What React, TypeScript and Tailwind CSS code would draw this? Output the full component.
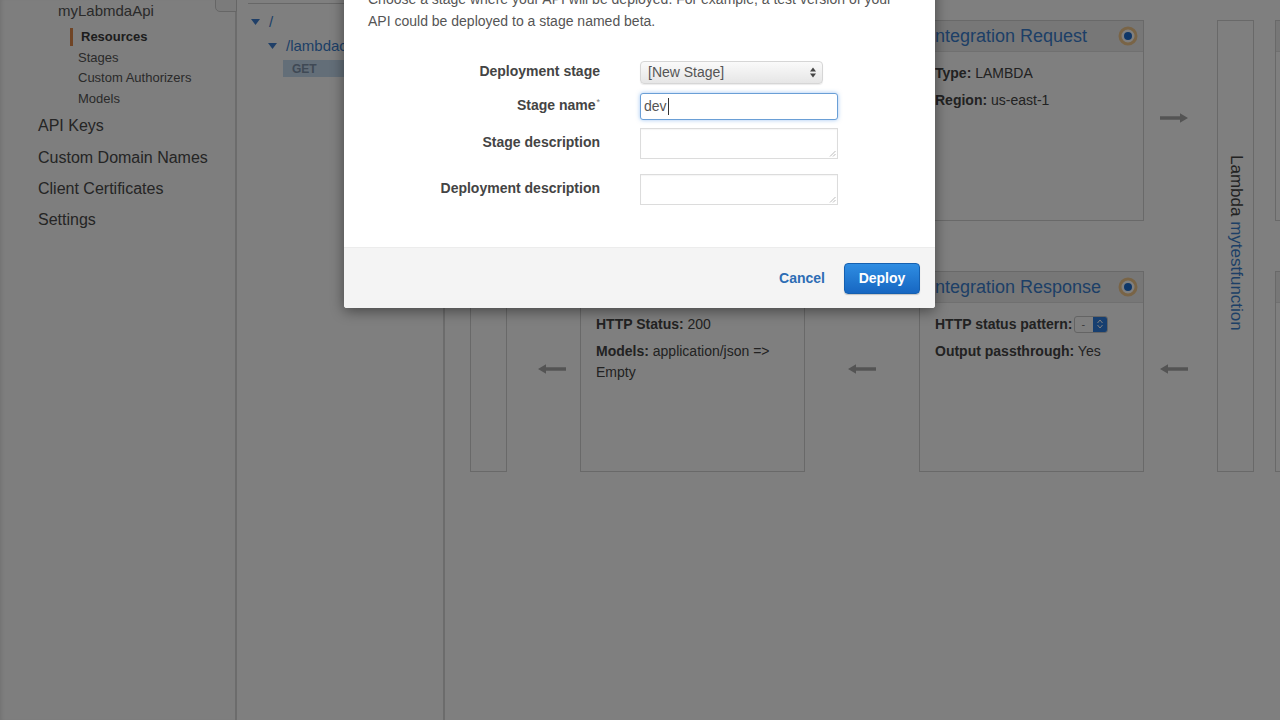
import React from "react"

const blue = "text-[#3b7fce]"

function Arrow({ dir }: { dir: "left" | "right" }) {
  return (
    <svg width="28" height="10" viewBox="0 0 28 10">
      {dir === "right" ? (
        <path d="M0 3.2h20V0.2L28 5l-8 4.8V6.8H0z" fill="#a9a9a9" />
      ) : (
        <path d="M28 3.2H8V0.2L0 5l8 4.8V6.8h20z" fill="#a9a9a9" />
      )}
    </svg>
  )
}

function StatusDot() {
  return (
    <svg width="20" height="20" viewBox="0 0 20 20">
      <circle cx="10" cy="10" r="8" fill="#fff" stroke="#f3c98c" strokeWidth="3" />
      <circle cx="10" cy="10" r="4" fill="#1f6fd0" />
    </svg>
  )
}

function Caret() {
  return (
    <svg width="9" height="6" viewBox="0 0 9 6">
      <path d="M0 0h9L4.5 6z" fill="#3f7fd0" />
    </svg>
  )
}

function Box({ title, header, children }: { title?: string; header?: boolean; children?: React.ReactNode }) {
  return (
    <div className="w-[225px] h-[201px] border border-[#d3d3d3] bg-white flex flex-col">
      {(title || header) && (
        <div className="h-[31px] shrink-0 bg-[#eeeeee] border-b border-[#e0e0e0] flex items-center justify-between pl-[10px] pr-[5px]">
          <span className={`text-[18px] ${blue}`}>{title}</span>
          <StatusDot />
        </div>
      )}
      <div className="px-[15px] pt-[11px] text-[14px] leading-[20px] text-[#444] flex flex-col gap-[7px]">
        {children}
      </div>
    </div>
  )
}

function ArrowCol({ width, shift }: { width: string; shift: string }) {
  return (
    <div className={`${width} ${shift} shrink-0 flex flex-col gap-[50px]`}>
      <div className="h-[201px] pb-[6px] flex items-center justify-center">
        <Arrow dir="right" />
      </div>
      <div className="h-[201px] pb-[6px] flex items-center justify-center">
        <Arrow dir="left" />
      </div>
    </div>
  )
}

function Field({ label, star, children }: { label: string; star?: boolean; children: React.ReactNode }) {
  return (
    <div className="flex items-center">
      <div className="w-[256px] shrink-0 text-right text-[14px] font-bold text-[#444] -mt-[3px]">
        {label}
        {star && <span className="relative -top-[5px] text-[9px] font-normal text-[#777] ml-[1px]">*</span>}
      </div>
      <div className="ml-[40px]">{children}</div>
    </div>
  )
}

function Textarea() {
  return (
    <div className="relative w-[198px] h-[31px] border border-[#dcdcdc] bg-white shadow-[inset_0_1px_1px_rgba(0,0,0,0.04)]">
      <svg className="absolute right-[1px] bottom-[1px]" width="7" height="7" viewBox="0 0 7 7">
        <path d="M6.5 1L1 6.5M6.5 4L4 6.5" stroke="#aaa" strokeWidth="0.8" />
      </svg>
    </div>
  )
}

export default function App() {
  return (
    <div className="relative isolate w-[1280px] h-[720px] overflow-hidden bg-white font-['Liberation_Sans',Arial,sans-serif]">
      <div className="relative z-0 flex h-full">
        {/* sidebar */}
        <aside className="relative w-[237px] shrink-0 h-full bg-[#fcfcfc] border-r-2 border-[#d9d9d9] shadow-[inset_4px_0_4px_-3px_rgba(0,0,0,0.12)]">
          <div className="absolute right-[-2px] top-[-6px] w-[22px] h-[18px] border border-[#cccccc] rounded-bl-[5px] bg-[#f7f7f7]" />
          <div className="pl-[58px] pt-[1px] text-[15px] leading-[20px] text-[#555]">myLabmdaApi</div>
          <div className="mt-[6px] text-[13px] leading-[20.6px] text-[#555]">
            <div className="relative pl-[81px] font-bold text-[#3a3a3a]">
              <span className="absolute left-[70px] top-[1px] w-[3px] h-[18px] bg-[#e0894a]" />
              Resources
            </div>
            <div className="pl-[78px]">Stages</div>
            <div className="pl-[78px]">Custom Authorizers</div>
            <div className="pl-[78px]">Models</div>
          </div>
          <div className="mt-[1px] pl-[38px] text-[16px] leading-[31.3px] text-[#4a4a4a]">
            <div>API Keys</div>
            <div>Custom Domain Names</div>
            <div>Client Certificates</div>
            <div>Settings</div>
          </div>
        </aside>

        {/* resource tree */}
        <section className="w-[208px] shrink-0 h-full border-r-2 border-[#d9d9d9]">
          <div className="ml-[11px] h-[4px] border-b border-[#cfcfcf]" />
          <div className="mt-[8px] pl-[14px] flex items-center gap-[9px] h-[20px]">
            <Caret />
            <span className={`text-[15px] ${blue}`}>/</span>
          </div>
          <div className="mt-[4px] pl-[31px] flex items-center gap-[9px] h-[20px]">
            <Caret />
            <span className={`text-[15px] ${blue}`}>/lambdacalc</span>
          </div>
          <div className="mt-[4px] ml-[46px] h-[17px] bg-[#c7dcf1] pl-[9px] flex items-center text-[12px] font-bold text-[#7f93aa]">
            GET
          </div>
        </section>

        {/* method execution diagram */}
        <main className="flex-1 flex pl-[25px] pt-[20px]">
          <div className="w-[37px] h-[452px] shrink-0 border border-[#d3d3d3] bg-white" />
          <ArrowCol width="w-[73px]" shift="pl-[16px]" />
          <div className="shrink-0 flex flex-col gap-[50px]">
            <Box header />
            <Box header>
              <div><b>HTTP Status:</b> 200</div>
              <div className="leading-[21px]"><b>Models:</b> application/json =&gt;<br />Empty</div>
            </Box>
          </div>
          <ArrowCol width="w-[114px]" shift="" />
          <div className="shrink-0 flex flex-col gap-[50px]">
            <Box title="Integration Request">
              <div><b>Type:</b> LAMBDA</div>
              <div><b>Region:</b> us-east-1</div>
            </Box>
            <Box title="Integration Response">
              <div className="flex items-center">
                <b>HTTP status pattern:</b>
                <span className="ml-[2px] inline-flex h-[17px] w-[34px] rounded-[3px] border border-[#c8c8c8] overflow-hidden bg-white">
                  <span className="flex-1 text-[11px] leading-[15px] pl-[6px] text-[#777]">-</span>
                  <span className="w-[14px] bg-[#2f7fe0] flex items-center justify-center">
                    <svg width="6" height="10" viewBox="0 0 6 10">
                      <path d="M0.5 4L3 1l2.5 3M0.5 6L3 9l2.5-3" stroke="#fff" strokeWidth="1" fill="none" />
                    </svg>
                  </span>
                </span>
              </div>
              <div><b>Output passthrough:</b> Yes</div>
            </Box>
          </div>
          <ArrowCol width="w-[73px]" shift="pr-[14px]" />
          <div className="w-[37px] h-[452px] shrink-0 border border-[#d3d3d3] bg-white flex justify-center pt-[134px]">
            <span className="[writing-mode:vertical-rl] text-[17px] text-[#444] leading-[20px]">
              Lambda <span className={blue}>mytestfunction</span>
            </span>
          </div>
          <div className="ml-[21px] shrink-0 flex flex-col gap-[50px]">
            <Box title="Method Request" />
            <Box title="Method Response">
              <div><b>S</b></div>
              <div><b>N</b></div>
            </Box>
          </div>
        </main>
      </div>

      {/* overlay */}
      <div className="absolute inset-0 z-10 bg-[rgba(0,0,0,0.5)]" />

      {/* modal */}
      <div className="absolute z-20 left-[344px] top-[-32px] w-[591px] bg-white rounded-b-[3px] shadow-[0_3px_14px_rgba(0,0,0,0.45)] overflow-hidden">
        <div className="px-[24px] pt-[20px] pb-[42px]">
          <p className="text-[14px] leading-[22px] text-[#555]">
            Choose a stage where your API will be deployed. For example, a test version of your API could be deployed to a stage named beta.
          </p>
          <div className="mt-[29px] -ml-[24px] flex flex-col">
            <Field label="Deployment stage">
              <div className="w-[183px] h-[23px] rounded-[4px] border border-[#d6d6d6] bg-gradient-to-b from-[#fafafa] to-[#e6e6e6] shadow-[0_1px_1px_rgba(0,0,0,0.08)] flex items-center justify-between pl-[7px] pr-[6px] text-[14px] text-[#555]">
                <span>[New Stage]</span>
                <svg width="6" height="11" viewBox="0 0 6 11">
                  <path d="M0 4.5L3 0.5L6 4.5zM0 6.5L3 10.5L6 6.5z" fill="#444" />
                </svg>
              </div>
            </Field>
            <div className="mt-[9px]">
              <Field label="Stage name" star>
                <div className="w-[198px] h-[27px] rounded-[3px] border border-[#6a9fd6] shadow-[0_0_4px_rgba(80,150,230,0.55)] bg-white flex items-center pl-[3px] text-[14px] text-[#555]">
                  dev
                  <span className="ml-[1px] w-[1px] h-[17px] bg-[#333]" />
                </div>
              </Field>
            </div>
            <div className="mt-[8px]">
              <Field label="Stage description">
                <Textarea />
              </Field>
            </div>
            <div className="mt-[15px]">
              <Field label="Deployment description">
                <Textarea />
              </Field>
            </div>
          </div>
        </div>
        <div className="h-[61px] bg-[#f4f4f4] border-t border-[#ececec] flex items-center justify-end pr-[15px]">
          <span className="text-[14px] font-bold text-[#2d6db4] mr-[19px]">Cancel</span>
          <div className="w-[76px] h-[31px] rounded-[4px] border border-[#1560b0] bg-gradient-to-b from-[#2f8de2] to-[#1767c2] shadow-[0_1px_1px_rgba(0,0,0,0.2)] flex items-center justify-center text-[14px] font-bold text-white">
            Deploy
          </div>
        </div>
      </div>
    </div>
  )
}
